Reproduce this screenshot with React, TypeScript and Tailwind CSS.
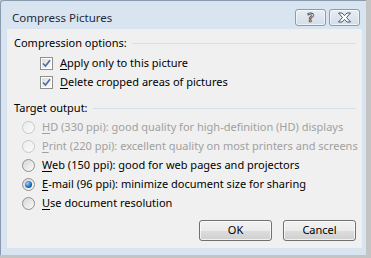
import React from "react";

const font = { fontFamily: '"Noto Sans", "Open Sans", sans-serif' };

function Checkbox() {
  return (
    <div className="w-[13px] h-[13px] border border-[#8e8f8f] bg-white p-[1px] shrink-0">
      <div className="w-full h-full bg-gradient-to-br from-[#dcdcdc] to-[#fbfbfb] flex items-center justify-center">
        <svg width="9" height="9" viewBox="0 0 9 9">
          <path d="M1 4.5 L3.5 7 L8 1.2" fill="none" stroke="#4f6a9d" strokeWidth="1.6" />
        </svg>
      </div>
    </div>
  );
}

function Radio({ checked, disabled }: { checked?: boolean; disabled?: boolean }) {
  return (
    <div
      className={
        "w-[13px] h-[13px] rounded-full border shrink-0 flex items-center justify-center " +
        (disabled
          ? "border-[#c8c8c8] bg-gradient-to-br from-[#ececec] to-[#fafafa]"
          : "border-[#8e8f8f] bg-gradient-to-br from-[#d6d6d6] to-[#fbfbfb]")
      }
    >
      {checked && (
        <div className="w-[7px] h-[7px] rounded-full bg-[radial-gradient(circle_at_35%_35%,#9cd3f5,#1a63b5_60%,#12428a)]" />
      )}
    </div>
  );
}

function Row({ children, disabled }: { children: React.ReactNode; disabled?: boolean }) {
  return (
    <div className={"h-[19px] flex items-center " + (disabled ? "text-[#a0a0a0]" : "text-black")}>
      {children}
    </div>
  );
}

function SectionLabel({ text }: { text: string }) {
  return (
    <div className="h-[20px] flex items-center pl-[7px] pr-[6px] gap-[5px]">
      <span className="text-black whitespace-nowrap">{text}</span>
      <div className="flex-1 h-px bg-[#d5dfe9] mt-[1px]" />
    </div>
  );
}

function TitleButton({ children }: { children: React.ReactNode }) {
  return (
    <div className="w-[31px] h-[17px] rounded-[3px] border border-[#8d9bae] bg-gradient-to-b from-[#e6edf5] to-[#d3deea] flex items-center justify-center shadow-[inset_0_0_0_1px_rgba(255,255,255,0.6)]">
      {children}
    </div>
  );
}

export default function App() {
  return (
    <div className="w-[371px] h-[258px] bg-[#c4c4c4] text-[11px]" style={font}>
      <div className="w-[366px] h-[255px] bg-[#d9e4f1] rounded-tl-[4px] border-l border-t border-[#8a9bb0] flex flex-col">
        <div className="h-[28px] flex items-center justify-between pl-[11px] pr-[6px] pt-[5px]">
          <span className="text-[#1e2a3a] text-[11.5px]">Compress Pictures</span>
          <div className="flex gap-[3px]">
            <TitleButton>
              <span className="text-[13px] font-bold leading-none text-white [-webkit-text-stroke:0.8px_#3a4656]">?</span>
            </TitleButton>
            <TitleButton>
              <svg width="15" height="11" viewBox="0 0 15 11">
                <path
                  d="M1.5 1 H5 L7.5 3.6 L10 1 H13.5 L9.5 5.5 L13.5 10 H10 L7.5 7.4 L5 10 H1.5 L5.5 5.5 Z"
                  fill="#fff"
                  stroke="#3a4656"
                  strokeWidth="0.9"
                  strokeLinejoin="round"
                />
              </svg>
            </TitleButton>
          </div>
        </div>
        <div className="ml-[6px] mr-[4px] mb-[7px] flex-1 bg-[#f0f0f0] flex flex-col pt-[4px]">
          <SectionLabel text="Compression options:" />
          <div className="pl-[33px] mt-[1px]">
            <Row>
              <Checkbox />
              <span className="ml-[7px]">
                <u className="underline-offset-2">A</u>pply only to this picture
              </span>
            </Row>
            <Row>
              <Checkbox />
              <span className="ml-[7px]">
                <u className="underline-offset-2">D</u>elete cropped areas of pictures
              </span>
            </Row>
          </div>
          <div className="mt-[6px]">
            <SectionLabel text="Target output:" />
          </div>
          <div className="pl-[15px]">
            <Row disabled>
              <Radio disabled />
              <span className="ml-[7px] whitespace-nowrap">
                <u className="underline-offset-2">H</u>D (330 ppi): good quality for high-definition (HD) displays
              </span>
            </Row>
            <Row disabled>
              <Radio disabled />
              <span className="ml-[7px] whitespace-nowrap">
                <u className="underline-offset-2">P</u>rint (220 ppi): excellent quality on most printers and screens
              </span>
            </Row>
            <Row>
              <Radio />
              <span className="ml-[7px] whitespace-nowrap">
                <u className="underline-offset-2">W</u>eb (150 ppi): good for web pages and projectors
              </span>
            </Row>
            <Row>
              <Radio checked />
              <span className="ml-[7px] whitespace-nowrap">
                <u className="underline-offset-2">E</u>-mail (96 ppi): minimize document size for sharing
              </span>
            </Row>
            <Row>
              <Radio />
              <span className="ml-[7px] whitespace-nowrap">
                <u className="underline-offset-2">U</u>se document resolution
              </span>
            </Row>
          </div>
          <div className="mt-[7px] flex justify-end gap-[11px] pr-[6px]">
            <button className="w-[73px] h-[21px] rounded-[3px] border border-[#707070] bg-[linear-gradient(#f2f2f2_0%,#ebebeb_50%,#dddddd_50%,#cfcfcf_100%)] text-black shadow-[inset_0_0_0_1px_rgba(255,255,255,0.7)]">
              OK
            </button>
            <button className="w-[73px] h-[21px] rounded-[3px] border border-[#707070] bg-[linear-gradient(#f2f2f2_0%,#ebebeb_50%,#dddddd_50%,#cfcfcf_100%)] text-black shadow-[inset_0_0_0_1px_rgba(255,255,255,0.7)]">
              Cancel
            </button>
          </div>
        </div>
      </div>
    </div>
  );
}
